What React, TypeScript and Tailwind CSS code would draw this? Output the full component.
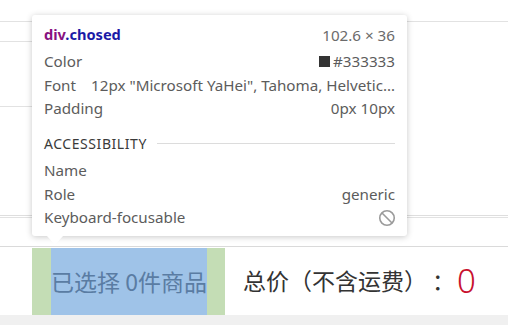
import React from "react";

/**
 * Cart footer with the DevTools inspect tooltip hovering over the
 * "chosed" element (green = padding, blue = content box).
 */

const labelFont = { fontFamily: '"Noto Sans", "Open Sans", Arial, sans-serif' };
const cjkFont = { fontFamily: '"Noto Sans CJK SC", "Noto Sans", sans-serif' };

function Row({ label, children }: { label: string; children?: React.ReactNode }) {
  return (
    <div className="flex h-[23.5px] items-center justify-between">
      <span>{label}</span>
      {children}
    </div>
  );
}

function NotAllowedIcon() {
  return (
    <svg width="18" height="18" viewBox="0 0 18 18" fill="none" className="mr-[-1px]">
      <circle cx="9" cy="9" r="7.25" stroke="#9b9b9b" strokeWidth="1.6" />
      <line x1="4" y1="4" x2="14" y2="14" stroke="#9b9b9b" strokeWidth="1.6" />
    </svg>
  );
}

function InspectTooltip() {
  return (
    <div
      className="absolute left-[32px] top-[15px] w-[375px] rounded-[3px] bg-white px-[12px] pb-[6px] pt-[8px] text-[15.2px] text-[#5c5c5c] shadow-[0_1px_6px_rgba(0,0,0,0.22)]"
      style={labelFont}
    >
      <div className="flex h-[24px] items-center justify-between">
        <span className="text-[14.6px] font-bold">
          <span className="text-[#881280]">div</span>
          <span className="text-[#1a1aa6]">.chosed</span>
        </span>
        <span className="text-[#6b6b6b]">102.6 × 36</span>
      </div>

      <div className="mt-[3px]">
        <Row label="Color">
          <span className="flex items-center gap-[3px]">
            <span className="h-[11px] w-[11px] bg-[#333333]" />
            #333333
          </span>
        </Row>
        <div className="flex h-[23.5px] items-center">
          <span>Font</span>
          <span className="ml-[12px] flex-1 whitespace-nowrap text-right">12px "Microsoft YaHei", Tahoma, Helvetic…</span>
        </div>
        <Row label="Padding">
          <span>0px 10px</span>
        </Row>
      </div>

      <div className="mt-[10.5px] flex h-[24px] items-center gap-[10px]">
        <span className="text-[14px] tracking-[0.04em] text-[#3a3a3a]">ACCESSIBILITY</span>
        <span className="h-px flex-1 bg-[#dcdcdc]" />
      </div>

      <div className="mt-[4px]">
        <Row label="Name" />
        <Row label="Role">
          <span>generic</span>
        </Row>
        <Row label="Keyboard-focusable">
          <NotAllowedIcon />
        </Row>
      </div>

      <div className="absolute left-[15px] top-full h-0 w-0 border-x-[8.5px] border-t-[9px] border-x-transparent border-t-white" />
    </div>
  );
}

export default function App() {
  return (
    <div className="relative h-[325px] w-[508px] overflow-hidden bg-white">
      <div className="h-[21px]" />
      <div className="h-[20px] border-t border-[#e2e2e2]" />
      <div className="h-[65px] w-[200px] border-t border-[#e2e2e2]" />
      <div className="h-[109px] w-[200px] border-t border-[#e2e2e2]" />
      <div className="h-[2px] border-t border-[#dedede]" />
      <div className="h-[29px] border-t border-[#e2e2e2]" />

      <div className="flex h-[69px] items-start border-t border-[#dadada]">
        <div className="mt-[1px] ml-[32px] flex h-[67px] w-[193px] items-center bg-[#c4ddb5] px-[19px]">
          <div className="flex h-full flex-1 items-center justify-center whitespace-nowrap bg-[#9fc3e8] text-[23px] text-[#5a7ca3]" style={cjkFont}>
            已选择 0件商品
          </div>
        </div>
        <div className="ml-[18px] flex h-[67px] items-center whitespace-nowrap text-[23px] text-[#333333]" style={cjkFont}>
          <span>总价（不含运费）</span>
          <span className="ml-[5px]">：</span>
          <span className="ml-[2px] text-[33px] font-light text-[#c8102e]" style={labelFont}>0</span>
        </div>
      </div>

      <div className="h-[10px] bg-[#f0f0f0]" />

      <InspectTooltip />
    </div>
  );
}
